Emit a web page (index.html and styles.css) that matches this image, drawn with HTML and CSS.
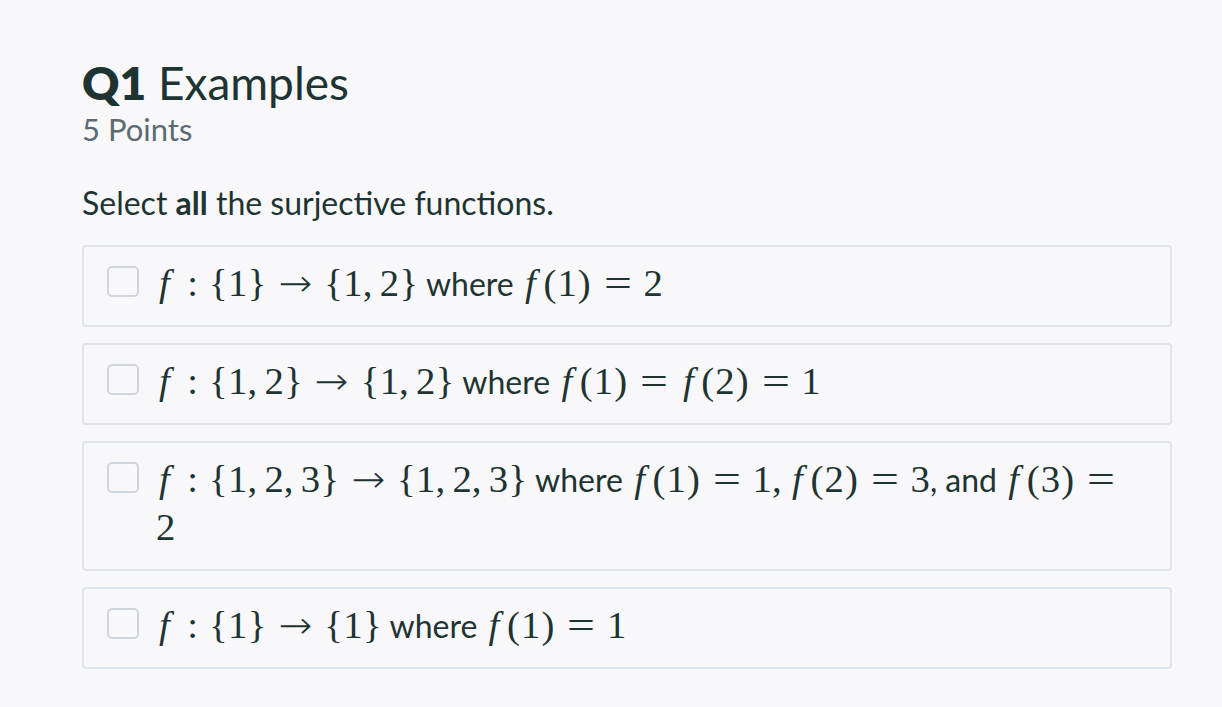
FILE: index.html
```html
<!DOCTYPE html>
<html lang="en">
<head>
<meta charset="utf-8">
<title>Q1 Examples</title>
<link rel="stylesheet" href="styles.css">
</head>
<body>
<main class="question">
  <header class="q-head">
    <h1 class="q-title"><span class="q-num">Q1</span> Examples</h1>
    <div class="q-points">5 Points</div>
  </header>
  <p class="q-prompt">Select <strong>all</strong> the surjective functions.</p>
  <ul class="options">
    <li class="option">
      <span class="box"></span>
      <div class="label"><span class="m"><i class="mi">f</i><span class="rel colon">:</span><span class="br">{</span>1<span class="br">}</span><span class="rel arrow">→</span><span class="br">{</span>1<span class="p">,</span>2<span class="br">}</span></span> where <span class="m"><i class="mi">f</i><span class="pa">(</span>1<span class="pa">)</span><span class="rel eq">=</span>2</span></div>
    </li>
    <li class="option">
      <span class="box"></span>
      <div class="label"><span class="m"><i class="mi">f</i><span class="rel colon">:</span><span class="br">{</span>1<span class="p">,</span>2<span class="br">}</span><span class="rel arrow">→</span><span class="br">{</span>1<span class="p">,</span>2<span class="br">}</span></span> where <span class="m"><i class="mi">f</i><span class="pa">(</span>1<span class="pa">)</span><span class="rel eq">=</span><i class="mi">f</i><span class="pa">(</span>2<span class="pa">)</span><span class="rel eq">=</span>1</span></div>
    </li>
    <li class="option">
      <span class="box"></span>
      <div class="label"><span class="m"><i class="mi">f</i><span class="rel colon">:</span><span class="br">{</span>1<span class="p">,</span>2<span class="p">,</span>3<span class="br">}</span><span class="rel arrow">→</span><span class="br">{</span>1<span class="p">,</span>2<span class="p">,</span>3<span class="br">}</span></span> where <span class="m"><i class="mi">f</i><span class="pa">(</span>1<span class="pa">)</span><span class="rel eq">=</span>1<span class="p">,</span><i class="mi">f</i><span class="pa">(</span>2<span class="pa">)</span><span class="rel eq">=</span>3</span>, and <span class="m"><i class="mi">f</i><span class="pa">(</span>3<span class="pa">)</span><span class="rel eq">=</span></span><br><span class="m">2</span></div>
    </li>
    <li class="option">
      <span class="box"></span>
      <div class="label"><span class="m"><i class="mi">f</i><span class="rel colon">:</span><span class="br">{</span>1<span class="br">}</span><span class="rel arrow">→</span><span class="br">{</span>1<span class="br">}</span></span> where <span class="m"><i class="mi">f</i><span class="pa">(</span>1<span class="pa">)</span><span class="rel eq">=</span>1</span></div>
    </li>
  </ul>
</main>
</body>
</html>
```

FILE: styles.css
```css
html, body {
  margin: 0;
  padding: 0;
  background: #f8f8fa;
}
body {
  font-family: Lato, "Open Sans", sans-serif;
  color: #1e3433;
}
.question {
  padding: 57px 50px 0 82px;
}
.q-head {
  display: flex;
  flex-direction: column;
}
.q-title {
  margin: 0;
  font-size: 46px;
  font-weight: 400;
  line-height: 52px;
}
.q-num {
  font-weight: 800;
}
.q-points {
  font-size: 31px;
  line-height: 40px;
  color: #5c6a72;
}
.q-prompt {
  margin: 36px 0 0;
  font-size: 32px;
  line-height: 36px;
}
.options {
  list-style: none;
  margin: 24px 0 0;
  padding: 0;
  display: flex;
  flex-direction: column;
  gap: 16px;
}
.option {
  display: flex;
  align-items: flex-start;
  gap: 17px;
  border: 2px solid #dfe3ea;
  border-radius: 4px;
  padding: 13px 24px 17px 23px;
  font-size: 32px;
  line-height: 48px;
}
.box {
  flex: none;
  box-sizing: border-box;
  width: 32px;
  height: 31px;
  margin-top: 6px;
  border: 2px solid #d0d6de;
  border-radius: 5px;
  background: #f9f9fb;
}
.label {
  flex: 1;
}
.m {
  font-family: "Liberation Serif", "DejaVu Serif", serif;
  font-size: 1.21em;
  line-height: 1;
  white-space: nowrap;
}
.mi {
  font-style: italic;
  padding: 0 0.17em 0 0.08em;
}
.rel {
  display: inline-block;
  text-align: center;
  margin: 0 0.278em;
}
.colon {
  width: 0.278em;
}
.eq {
  width: 0.778em;
  transform: scaleX(1.28);
}
.arrow {
  width: 1em;
  font-family: "DejaVu Sans", sans-serif;
  font-weight: 200;
  font-size: 0.95em;
  transform: scaleX(1.1);
}
.br {
  padding: 0 0.01em;
}
.pa {
  padding: 0 0.028em;
}
.p {
  padding-right: 0.19em;
}
```
